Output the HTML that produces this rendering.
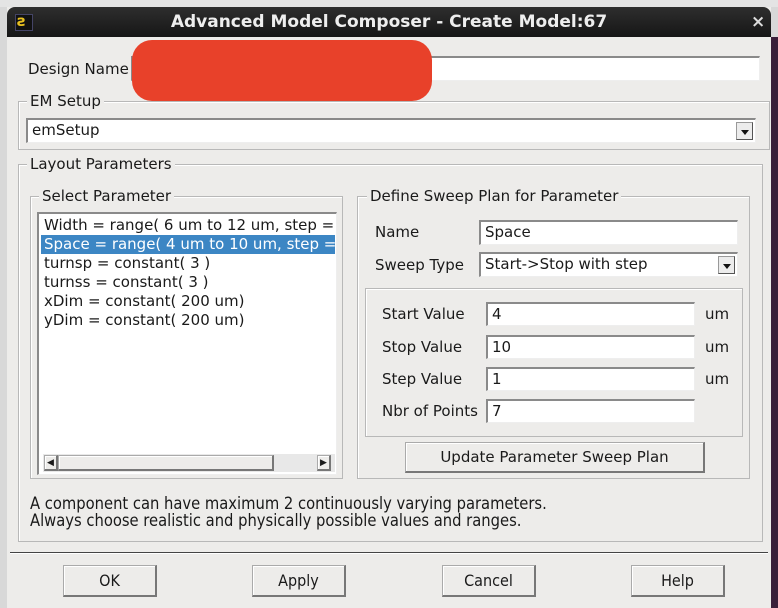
<!DOCTYPE html>
<html><head><style>
*{box-sizing:border-box;margin:0;padding:0}
body{width:778px;height:608px;overflow:hidden;background:#d8d8d8;font-family:"DejaVu Sans","Liberation Sans",sans-serif;font-size:15px;color:#1a1a1a;position:relative}
.a{position:absolute}
.dlg{left:7px;top:7px;width:764px;height:601px;background:#edecea}
.title{left:7px;top:7px;width:764px;height:30px;background:linear-gradient(#2e2e2e,#161616);border-radius:8px 8px 0 0;color:#eee;font-weight:bold;font-size:17px;text-align:center;line-height:30px}
.inp{background:#fff;border-top:2px solid #8a8a8a;border-left:2px solid #8a8a8a;border-right:1px solid #eee;border-bottom:1px solid #eee;padding-left:4px;line-height:21px;white-space:nowrap;overflow:hidden}
.grp{border:1px solid #b8b8b8;box-shadow:inset 1px 1px 0 #fff}
.lbl{background:#edecea;padding:0 3px;line-height:16px}
.btn{background:#edecea;border:1px solid #aaa;border-right:2px solid #777;border-bottom:2px solid #777;text-align:center;box-shadow:inset 1px 1px 0 #fff}
.dd{position:absolute;right:2px;top:2px;width:17px;height:18px;border:1px solid #999;border-right-color:#555;border-bottom-color:#555;background:#ececec}
.dd:after{content:"";position:absolute;left:4px;top:7px;border-left:4px solid transparent;border-right:4px solid transparent;border-top:5px solid #111}
.row{position:absolute;left:2px;height:19px;line-height:19px;padding-left:3px;white-space:nowrap;width:294px;overflow:hidden}
.cond{font-family:"DejaVu Sans Condensed","Liberation Sans Narrow",sans-serif;font-size:15px}
</style></head><body>
<div class="a" style="left:0;top:0;width:778px;height:7px;background:#e4e4e4"></div>
<div class="a" style="left:771px;top:37px;width:7px;height:571px;background:#3a1f3a"></div>
<div class="a dlg"></div>
<div class="a title">Advanced Model Composer - Create Model:67</div>
<div class="a" style="left:15px;top:14px;width:18px;height:17px;background:#111;border:1px solid #446"></div>
<div class="a" style="left:17px;top:12px;color:#e8c020;font-weight:bold;font-size:15px">ꙅ</div>
<div class="a" style="left:751px;top:12px;color:#ddd;font-size:17px;font-weight:bold">×</div>

<div class="a" style="left:28px;top:60px">Design Name</div>
<div class="a inp" style="left:131px;top:56px;width:629px;height:25px"></div>
<div class="a" style="left:132px;top:40px;width:300px;height:61px;background:#e8412a;border-radius:20px"></div>

<div class="a grp" style="left:18px;top:101px;width:752px;height:49px"></div>
<div class="a lbl" style="left:27px;top:93px">EM Setup</div>
<div class="a inp" style="left:26px;top:118px;width:730px;height:25px">emSetup<div class="dd"></div></div>

<div class="a grp" style="left:18px;top:164px;width:745px;height:378px"></div>
<div class="a lbl" style="left:27px;top:156px">Layout Parameters</div>

<div class="a grp" style="left:30px;top:196px;width:313px;height:283px"></div>
<div class="a lbl" style="left:39px;top:188px">Select Parameter</div>
<div class="a inp" style="left:37px;top:212px;width:300px;height:263px;padding:0">
<div class="row" style="top:2px">Width = range( 6 um to 12 um, step = 1 um)</div>
<div class="row" style="top:21px;background:#3c86c4;color:#fff">Space = range( 4 um to 10 um, step = 1 um)</div>
<div class="row" style="top:40px">turnsp = constant( 3 )</div>
<div class="row" style="top:59px">turnss = constant( 3 )</div>
<div class="row" style="top:78px">xDim = constant( 200 um)</div>
<div class="row" style="top:97px">yDim = constant( 200 um)</div>
<div class="a" style="left:4px;top:240px;width:292px;height:18px;background:#e8e8e8"></div>
<div class="a btn" style="left:5px;top:241px;width:14px;height:16px;font-size:9px;line-height:14px">◀</div>
<div class="a btn" style="left:19px;top:241px;width:216px;height:16px"></div>
<div class="a btn" style="left:278px;top:241px;width:14px;height:16px;font-size:9px;line-height:14px">▶</div>
</div>

<div class="a grp" style="left:357px;top:196px;width:393px;height:283px"></div>
<div class="a lbl" style="left:367px;top:188px">Define Sweep Plan for Parameter</div>
<div class="a" style="left:375px;top:223px">Name</div>
<div class="a inp" style="left:479px;top:220px;width:259px;height:25px">Space</div>
<div class="a" style="left:375px;top:256px">Sweep Type</div>
<div class="a inp" style="left:479px;top:252px;width:259px;height:25px">Start-&gt;Stop with step<div class="dd"></div></div>
<div class="a grp" style="left:365px;top:288px;width:378px;height:149px"></div>
<div class="a" style="left:382px;top:305px">Start Value</div>
<div class="a inp" style="left:486px;top:302px;width:209px;height:24px">4</div>
<div class="a" style="left:705px;top:305px">um</div>
<div class="a" style="left:382px;top:338px">Stop Value</div>
<div class="a inp" style="left:486px;top:335px;width:209px;height:24px">10</div>
<div class="a" style="left:705px;top:338px">um</div>
<div class="a" style="left:382px;top:370px">Step Value</div>
<div class="a inp" style="left:486px;top:367px;width:209px;height:24px">1</div>
<div class="a" style="left:705px;top:370px">um</div>
<div class="a" style="left:382px;top:402px">Nbr of Points</div>
<div class="a inp" style="left:486px;top:399px;width:209px;height:24px">7</div>
<div class="a btn" style="left:405px;top:442px;width:300px;height:31px;line-height:29px">Update Parameter Sweep Plan</div>

<div class="a cond" style="left:30px;top:495px;line-height:17px;font-size:16.4px">A component can have maximum 2 continuously varying parameters.<br>Always choose realistic and physically possible values and ranges.</div>

<div class="a" style="left:10px;top:552px;width:758px;height:2px;background:#444;border-bottom:1px solid #fff"></div>
<div class="a btn cond" style="left:63px;top:565px;width:94px;height:32px;line-height:30px;font-size:16px">OK</div>
<div class="a btn cond" style="left:252px;top:565px;width:94px;height:32px;line-height:30px;font-size:16px">Apply</div>
<div class="a btn cond" style="left:442px;top:565px;width:94px;height:32px;line-height:30px;font-size:16px">Cancel</div>
<div class="a btn cond" style="left:631px;top:565px;width:94px;height:32px;line-height:30px;font-size:16px">Help</div>
</body></html>
